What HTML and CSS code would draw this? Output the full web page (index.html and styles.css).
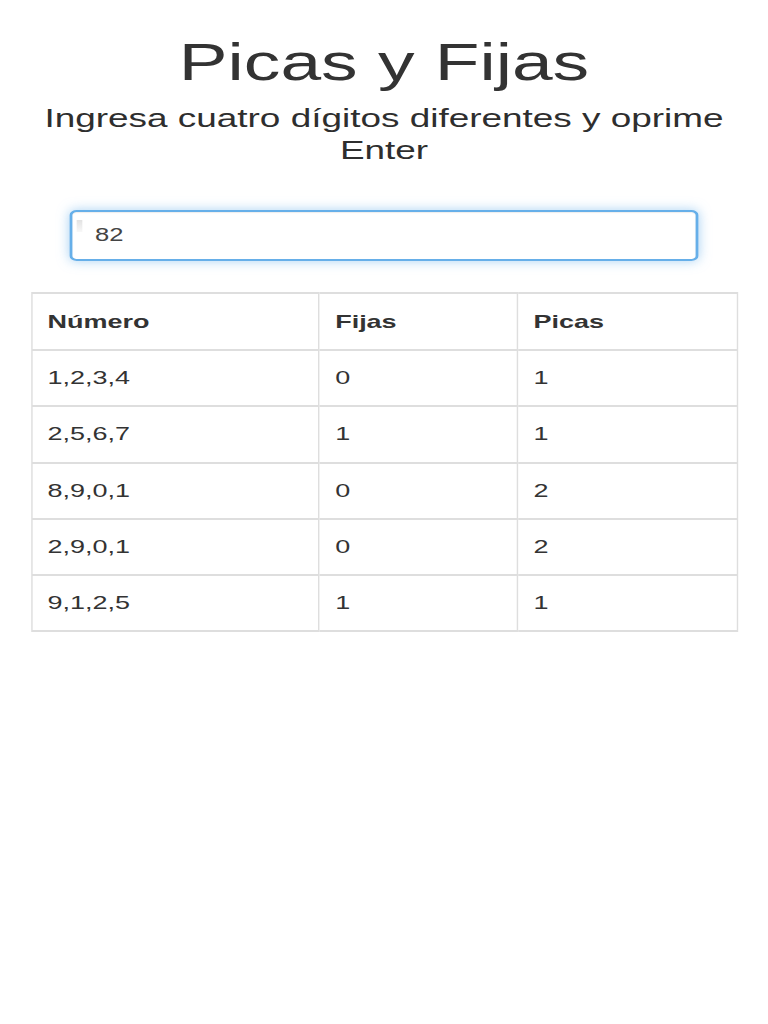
FILE: index.html
```html
<!DOCTYPE html>
<html>
<head>
<meta charset="utf-8">
<link rel="stylesheet" href="styles.css">
</head>
<body>
<div class="page">
  <h1 class="title">Picas y Fijas</h1>
  <h2 class="subtitle">Ingresa cuatro dígitos diferentes y oprime Enter</h2>
  <div class="field-wrap">
    <div class="field"><span class="caret-mark"></span><span class="value">82</span></div>
  </div>
  <table class="grid">
    <colgroup><col class="c1"><col class="c2"><col class="c3"></colgroup>
    <thead>
      <tr><th>Número</th><th>Fijas</th><th>Picas</th></tr>
    </thead>
    <tbody>
      <tr><td>1,2,3,4</td><td>0</td><td>1</td></tr>
      <tr><td>2,5,6,7</td><td>1</td><td>1</td></tr>
      <tr><td>8,9,0,1</td><td>0</td><td>2</td></tr>
      <tr><td>2,9,0,1</td><td>0</td><td>2</td></tr>
      <tr><td>9,1,2,5</td><td>1</td><td>1</td></tr>
    </tbody>
  </table>
</div>
</body>
</html>
```
FILE: styles.css
```css
html, body {
  margin: 0;
  padding: 0;
  background: #fff;
  overflow: hidden;
}
body {
  font-family: "Liberation Sans", Arial, Helvetica, sans-serif;
  color: #333;
}
/* the reference is a horizontally stretched capture: lay out at 541px and stretch */
.page {
  box-sizing: border-box;
  width: 541px;
  padding-top: 33px;
  display: flex;
  flex-direction: column;
  align-items: center;
  transform: scaleX(1.4196);
  transform-origin: 0 0;
}
.title {
  margin: 0;
  font-size: 51.5px;
  font-weight: normal;
  line-height: 58px;
  text-align: center;
  color: #333;
}
.subtitle {
  margin: 11px 0 0;
  font-size: 26px;
  font-weight: normal;
  line-height: 32px;
  text-align: center;
  color: #2e2e2e;
}
.field-wrap {
  margin-top: 44px;
  width: 100%;
  display: flex;
  justify-content: center;
}
.field {
  box-sizing: border-box;
  width: 443px;
  height: 51px;
  border: 2px solid #66afe9;
  border-radius: 5px;
  box-shadow: inset 0 1px 1px rgba(0,0,0,.075), 0 0 10px rgba(102,175,233,.55);
  display: flex;
  align-items: center;
  padding-left: 16px;
  position: relative;
  font-size: 18px;
  color: #444;
}
.caret-mark {
  position: absolute;
  left: 3px;
  top: 8px;
  width: 3.5px;
  height: 12px;
  background: linear-gradient(#e2e2e2, #f8f8f8);
}
.grid {
  margin-top: 31px;
  border-collapse: collapse;
  width: 498px;
  font-size: 19px;
  color: #333;
}
.c1 { width: 203px; }
.c2 { width: 140px; }
.c3 { width: 155px; }
.grid th, .grid td {
  border-style: solid;
  border-color: #dedede;
  border-width: 2px 1.4px;
  text-align: left;
  padding: 0 0 0 11px;
  height: 54.25px;
}
.grid th {
  font-weight: bold;
  height: 55px;
}
```
